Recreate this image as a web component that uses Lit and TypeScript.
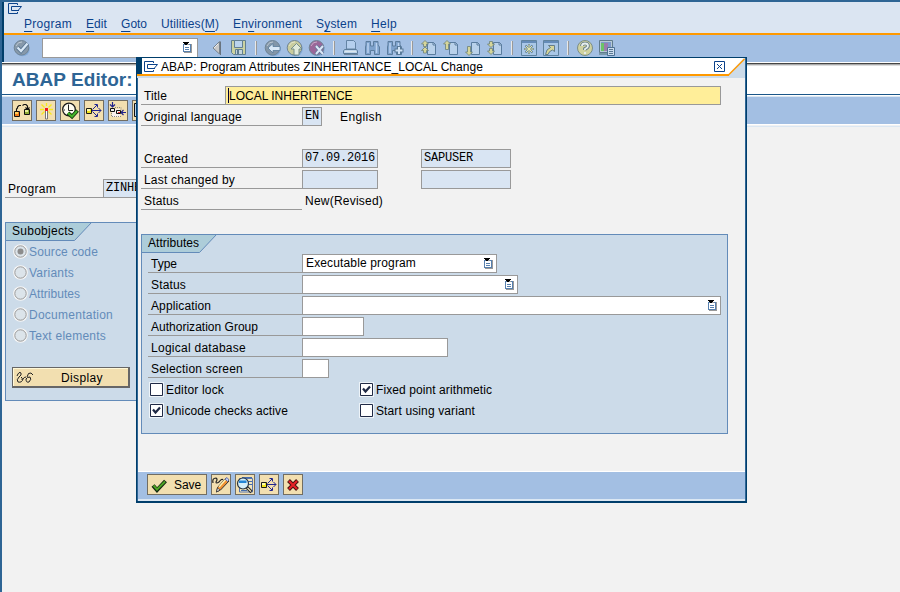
import { LitElement, html, svg, css, nothing } from "lit";
import { customElement, property } from "lit/decorators.js";
import { styleMap } from "lit/directives/style-map.js";

const SANS = '"Liberation Sans", Arial, sans-serif';
const MONO = '"Liberation Mono", "Courier New", monospace';
const ctx = document.createElement("canvas").getContext("2d")!;

/* Letter spacing that makes a label take the given width. */
const label = (text: string, width: number, font = `12px ${SANS}`, content: unknown = text) => {
  ctx.font = font;
  const ls = (width - ctx.measureText(text).width) / text.length;
  return html`<span style=${styleMap({ letterSpacing: ls.toFixed(3) + "px" })}>${content}</span>`;
};
const mono = (text: string) => label(text, text.length * 7, `12px ${MONO}`);

const page = svg`<path d="M7.500 3.500H13.500L15.500 5.500V15.500H7.500Z" fill="#b9d1ea" stroke="#5a7c9e"/><path d="M13 3V6H16" fill="none" stroke="#5a7c9e"/>`;
const binoc = svg`<path d="M2 2.500H6.500V7H9.500V2.500H14V6L15.500 8V15.500H10.500V11.500H6.500V15.500H1.500V8L2 6Z" fill="#7ea2cc" stroke="#5c7d9e"/><path d="M4 4V14M12.500 4V14" stroke="#bad2ef" stroke-width="1.500"/>`;
const up = (x: number, y: number, h = 7) => svg`<path d="M${x} ${y}L${x + 3.5} ${y + 3.5}H${x + 1.5}V${y + h}H${x - 1.5}V${y + 3.5}H${x - 3.5}Z" fill="#d6d69a" stroke="#6d8176" stroke-width=".8"/>`;
const down = (x: number, y: number, h = 7) => svg`<path d="M${x} ${y}L${x + 3.5} ${y - 3.5}H${x + 1.5}V${y - h}H${x - 1.5}V${y - 3.5}H${x - 3.5}Z" fill="#d6d69a" stroke="#6d8176" stroke-width=".8"/>`;
const ball = (fill: string) => svg`<circle cx="9.500" cy="10" r="7.300" fill="#83abd8"/><circle cx="8.500" cy="8.800" r="7.300" fill=${fill} stroke="#708495"/><path d="M3 7Q5 2.500 9 3" fill="none" stroke="#fff" opacity=".45"/>`;

const icons: Record<string, unknown> = {
  ok: svg`${ball("#8799aa")}<path d="M4.500 8.500L8 12L14.500 4.500" fill="none" stroke="#567491" stroke-width="4"/><path d="M4.500 8.500L8 12L14.500 4.500" fill="none" stroke="#d9e8f6" stroke-width="2.300"/>`,
  prev: svg`<path d="M11.500 2.500V15L5 9Z" fill="#c9c9c9" stroke="#77828c"/><path d="M12.500 2.500V16" stroke="#68737f"/><path d="M10 5L6 9" stroke="#eee"/>`,
  disk: svg`<path d="M1.500 1.500H15.500V15.500H3.500L1.500 13.500Z" fill="#cbd2a1" stroke="#627f91"/><path d="M4.500 1.500H12.500V8.500H4.500Z" fill="#bad3ed" stroke="#627f91"/><path d="M5.500 10.500H12.500V15.500H5.500Z" fill="#c5d5dd" stroke="#627f91"/><path d="M8 11V15" stroke="#5f7c90" stroke-width="2"/>`,
  back: svg`${ball("#8396a8")}<path d="M4 9L9 4.500V7.500H16V11.500H9V14Z" fill="#d9e8f6" stroke="#587b9b" stroke-width=".8"/>`,
  up: svg`${ball("#c9cc9d")}<path d="M10.500 4.500L16 10H13V16H8V10H5Z" fill="#e2ebdb" stroke="#6d8784" stroke-width=".9"/>`,
  cancel: svg`${ball("#9a6799")}<path d="M8 7L15 15M15 7L8 15" stroke="#5f789a" stroke-width="3.500"/><path d="M8 7L15 15M15 7L8 15" stroke="#dde7f6" stroke-width="2"/>`,
  print: svg`<path d="M4.500 1.500H11.500L13.500 3.500V10H4.500Z" fill="#b5cfee" stroke="#6484a5"/><path d="M2.500 10.500H14.500L15.500 12V14.500H1.500V12Z" fill="#bfd5eb" stroke="#5d7d9c"/><path d="M2 15.500H16" stroke="#6f879e"/><path d="M3 12.500H14" stroke="#dbe7ed"/>`,
  find: binoc,
  findnext: svg`${binoc}<path d="M13 7V16M8.500 11.500H17.500" stroke="#587997" stroke-width="4.200"/><path d="M13 8V15M9.500 11.500H16.500" stroke="#d0e2f5" stroke-width="2"/>`,
  first: svg`${page}${up(5, 1.5, 6)}${up(5, 8, 6)}`,
  pgup: svg`${page}${up(5, 1.5, 9)}`,
  pgdn: svg`${page}${down(5, 16.5, 9)}`,
  last: svg`${page}${down(5, 8.5, 6)}${down(5, 15.5, 6)}`,
  session: svg`<path d="M1.500 1.500H16.500V16.500H1.500Z" fill="#a9c7e7" stroke="#60839f"/><path d="M2 3H16" stroke="#648bb8" stroke-width="2"/><path d="M9 5V15M4 10H14M5.500 6.500L12.500 13.500M12.500 6.500L5.500 13.500" stroke="#627f91" stroke-width="1.800"/><path d="M9 5.500V14.500M4.500 10H13.500M6 7L12 13M12 7L6 13" stroke="#e4e6a9"/>`,
  shortcut: svg`<path d="M1.500 1.500H16.500V16.500H1.500Z" fill="#a9c7e7" stroke="#60839f"/><path d="M2 3H16" stroke="#648bb8" stroke-width="2"/><path d="M6.500 6.500H12.500V12.500L10.500 11Q7 12 6 15.500H3.500Q4 10 8.500 8.500Z" fill="#d6d69a" stroke="#5b7580" stroke-width=".9"/>`,
  help: svg`<circle cx="9" cy="9" r="7.500" fill="#d0d29f" stroke="#7c8e88"/><path d="M6 7Q6 4.500 9 4.500Q12 4.500 12 7Q12 8.500 9 10V11" fill="none" stroke="#657d87" stroke-width="3.700"/><path d="M6 7Q6 4.500 9 4.500Q12 4.500 12 7Q12 8.500 9 10V11M9 13V15" fill="none" stroke="#e5eded" stroke-width="1.900"/>`,
  monitor: svg`<path d="M1.500 1.500H14.500V13.500H1.500Z" fill="#b7cbd6" stroke="#607b8c"/><path d="M3 3H13V12H3Z" fill="#7e98ca"/><path d="M3 4H6V12H3Z" fill="#6cc468"/><path d="M6 4H10V12H6Z" fill="#9b7cad"/><path d="M1 15H9" stroke="#7998aa" stroke-width="2"/><path d="M9.500 8.500H16.500V16.500H9.500Z" fill="#cbdced" stroke="#4f7295"/><path d="M11 10.500H15M11 12.500H15M11 14.500H15" stroke="#5b7894"/>`,

  objects: svg`<path d="M3.500 9V7L4.500 6V5L6 3.500H8M9.500 3.500L11 2.500H13L14.500 4V7M12.500 5.500L14.500 7.500L16.500 5.500" fill="none" stroke="#111" stroke-width="1.100"/><path d="M1.500 9.500H6.500V14.500H1.500Z" fill="#f27b18" stroke="#111"/><path d="M2 10H5V12H2Z" fill="#ffd05c"/><path d="M11.500 7.500H16.500V12.500H11.500Z" fill="#8eaa35" stroke="#111"/><path d="M12 8H15V10H12Z" fill="#e6ee95"/>`,
  wand: svg`<path d="M9.500 1V4M3 7.500H7M12 7.500H16M4.500 2.500L7.500 5.500M14.500 2.500L11.500 5.500M4.500 12.500L7.500 9.500M14.500 12.500L11.500 9.500" stroke="#f8e81a" stroke-width="1.300"/><path d="M8.500 8.500H10.500V17H8.500Z" fill="#fff" stroke="#777"/><path d="M8 6H11V9H8Z" fill="#f01818"/>`,
  clock: svg`<circle cx="8" cy="7.500" r="6.300" fill="#fffdf2" stroke="#181818" stroke-width="1.300"/><path d="M7.500 2.500V8.500H12M3 8H4M7.500 13V12" fill="none" stroke="#222"/><path d="M7 11L11 14.500L16.500 8.500" fill="none" stroke="#173a11" stroke-width="3.900"/><path d="M7 11L11 14.500L16 9" fill="none" stroke="#43b52a" stroke-width="2"/>`,
  where: svg`<path d="M1.500 6.500H6.500V11.500H1.500Z" fill="#f2e51c" stroke="#191919"/><path d="M2 8H5" stroke="#fffbb0" stroke-width="2"/><path d="M7 8.500H16M7.500 7.500L12 3M7.500 9.500L12 14M13.500 6L16 8.500L13.500 11M9.500 2.500H12.500V5.500M9.500 14.500H12.500V11.500" fill="none" stroke="#202590"/>`,
  move: svg`<path d="M3.500 0V5M1 2.500L3.500 5L6 2.500M17 10.500H12M14.500 8L12 10.500L14.500 13" fill="none" stroke="#20238c" stroke-width="1.200"/><path d="M3 7H11V15H3Z" fill="#f7f0ee"/><path d="M1.500 6.500H5.500V9.500H1.500ZM7.500 8.500H11.500V11.500H7.500Z" fill="#eee" stroke="#111"/><path d="M9 10H11V11H9Z" fill="#ee3333"/><path d="M2.500 11V14.500H13M6 5.500H12V8" fill="none" stroke="#888" stroke-dasharray="1 1"/>`,
  window: svg`<path d="M1.500 1.500H16V14.500H1.500Z" fill="#b9d2ed" stroke="#111"/>`,
  glasses: svg`<path d="M1 8Q3 3 5 5Q6 7 3 9Q0 12 2 14Q6 15 7 11Q8 9 10 9M10 11Q10 15 13 14Q16 11 14 9Q11 9 10 11M11 9Q12 4 15 5L17 7M5 9Q7 10 6 12" fill="none" stroke="#222"/>`,
  check: svg`<path d="M3 9.500L7 14L15.500 5" fill="none" stroke="#132711" stroke-width="4"/><path d="M3.500 9.500L7 13.500L15 5.500" fill="none" stroke="#4fa425" stroke-width="1.900"/>`,
  edit: svg`<path d="M1 7Q0 2 4 2Q6 3 4 6Q4 8 7 6Q10 2 11 4" fill="none" stroke="#222" stroke-width="1.200"/><path d="M14 2L17 5L8.500 14L4.500 16L5.500 11.500Z" fill="#f19133" stroke="#333"/><path d="M14 3L7 11" stroke="#fff1b1" stroke-width="1.500"/><path d="M13 3L15 1.500L17 4L15.500 5.500Z" fill="#c2d0f1" stroke="#4b5aa0" stroke-width=".8"/><path d="M5.500 12L8 14L4.500 16Z" fill="#eee" stroke="#222" stroke-width=".6"/>`,
  detail: svg`<path d="M3.500 2.500H16.500V16H3.500Z" fill="#f1e7bf" stroke="#5674b0"/><path d="M6 1.500H16M12 5.500H16M13 8.500H16M5 14.500H11" stroke="#456cab"/><circle cx="7" cy="7.500" r="5.500" fill="#d4effb" stroke="#283440" stroke-width="1.200"/><path d="M3 7V4.500H10.500V7Z" fill="#2385d5"/><path d="M11 11.500L15.500 16" stroke="#222" stroke-width="3.200"/><path d="M11.500 12L15 15.500" stroke="#eee2bc" stroke-width="1.200"/>`,
  close: svg`<path d="M4.500 4.500L13.500 13.500M13.500 4.500L4.500 13.500" stroke="#451310" stroke-width="4"/><path d="M5 5L13 13M13 5L5 13" stroke="#e62225" stroke-width="2.100"/>`,
};
const icon = (name: string) => html`<svg class="ic" width="18" height="18" viewBox="0 0 18 18" fill="none">${icons[name]}</svg>`;
const exit = html`<svg class="exit" width="16" height="13" viewBox="0 0 16 13" fill="none" stroke="#0b428b"><path d="M10.500 3V1.500H1.500V11.500H10.500V10M12 8.500H4.500V4.500H14.500L11.500 8" /></svg>`;
const drop = html`<svg class="drop" width="9" height="11" viewBox="0 0 9 11" shape-rendering="crispEdges"><path d="M1 2H9V11H1Z" fill="#999"/><path d="M.5 2.500H7.500V9.500H.5Z" fill="#fff" stroke="#5780ae"/><path d="M2 5.500H6M2 7.500H6" stroke="#5780ae"/><path d="M4 2H6V3H4Z" fill="#999"/><path d="M0 0H6V1H5V2H4V3H2V2H1V1H0Z" fill="#000"/></svg>`;

const base = css`
  * { box-sizing: border-box; }
  span { white-space: pre; }
  svg { display: block; flex: none; }
  .field { height: 19px; border: 1px solid #999; background: #fff; display: flex; align-items: center; padding-left: 3px; line-height: 17px; flex: none; }
  .field.ro { background: #d9e5f3; }
  .mono { font-family: "Liberation Mono", "Courier New", monospace; padding-left: 2px; }
  .lab { height: 19px; border-bottom: 1px solid #999; padding: 3px 0 0 3px; line-height: 15px; flex: none; }
  .drop { margin: 3px 3px 0 auto; align-self: flex-start; }
  .btn { display: flex; align-items: center; justify-content: center; width: 20px; height: 21px; padding-top: 1px; background: #f2dfb0; border: 1px solid #726d61; overflow: hidden; flex: none; }
`;

@customElement("group-box")
class GroupBox extends LitElement {
  @property() heading = "";
  @property({ type: Number }) span = 50;
  @property({ type: Number }) tab = 75;
  static styles = [base, css`
    :host { display: block; border: 1px solid #638bb9; background: #ccdbe9; }
    .head { position: relative; height: 18px; display: flex; }
    .head svg { margin: -1px 0 0 -1px; }
    .head div { position: absolute; left: 6px; top: 0; line-height: 16px; }
  `];
  render() {
    const t = this.tab;
    return html`<div class="head"><svg width=${t} height="19" viewBox="0 0 ${t} 19"><path d="M.5 .5H${t - 0.5}L${t - 17.5} 18.5H.5Z" fill="#adcdd9" stroke="#638bb9"/></svg>
      <div>${label(this.heading, this.span)}</div></div><slot></slot>`;
  }
}

@customElement("attributes-dialog")
class AttributesDialog extends LitElement {
  static styles = [base, css`
    :host { display: flex; flex-direction: column; background: #f2f2f2; border: 1px solid #003e6b; border-bottom-width: 2px; box-shadow: inset 1px 0 #2e6595, inset -1px 0 #2e6595; color: #000; }
    .bar { height: 20px; flex: none; display: flex; background: #ccdbe9; padding-left: 5px; position: relative; margin-right: 1px; }
    .corner { position: absolute; left: 0; top: 0; }
    .name { position: relative; display: flex; line-height: 18px; }
    .exit { margin: 2px 2px 0 1px; }
    .x { position: relative; margin: 3px 20px 0 auto; }
    .body { flex: 1; padding: 8px 18px 0 4px; }
    .row { display: flex; margin-bottom: 2px; }
    .row .lab { width: 161px; }
    .row.title .lab { width: 84px; }
    .field.big { width: 496px; background: #ffee99; padding-left: 2px; line-height: 18px; }
    .caret { width: 1px; height: 15px; background: #003; flex: none; }
    .en { width: 20px; } .w76 { width: 76px; } .w90 { width: 90px; margin-left: 43px; }
    .plain { line-height: 20px; height: 19px; padding-left: 3px; }
    .plain.far { padding-left: 18px; }
    .skip { height: 21px; }
    group-box { height: 200px; margin-top: 24px; width: 587px; }
    .attrs { padding: 1px 0 0 6px; }
    .attrs .lab { width: 154px; padding-left: 3px; }
    .checks { display: grid; grid-template-columns: 210px 1fr; grid-auto-rows: 21px; padding: 2px 0 0 1px; }
    .check { display: flex; align-items: center; gap: 2px; height: 15px; }
    .foot { height: 30px; flex: none; border-top: 1px solid #fff; background: #a3bfe3; border-bottom: 2px solid #dbe7f3; display: flex; gap: 4px; padding: 2px 0 0 9px; margin: 0 1px; }
    .save { width: 60px; justify-content: flex-start; gap: 6px; padding-left: 2px; }
  `];
  row(name: string, w: number, fw: number, value: unknown = nothing, menu = false) {
    return html`<div class="row"><div class="lab">${label(name, w)}</div><div class="field" style=${styleMap({ width: fw + "px" })}>${value}${menu ? drop : nothing}</div></div>`;
  }
  check(name: string, w: number, on: boolean) {
    return html`<div class="check"><svg width="15" height="15" viewBox="0 0 15 15"><path d="M0 0H15V15H0Z" fill="#edf3f8"/><path d="M1.500 1.500H13.500V13.500H1.500Z" fill="#fff" stroke="#202a46"/>${on ? svg`<path d="M4 6.500L6.500 9.500L11 4.500" fill="none" stroke="#202a46" stroke-width="2.200"/>` : nothing}</svg>${label(name, w)}</div>`;
  }
  render() {
    return html`
      <div class="bar">
        <svg class="corner" width="608" height="20" viewBox="0 0 608 20"><path d="M4 0H607L592 16H4Z" fill="#fff"/><path d="M0 0H5V16H0Z" fill="#003e6b"/><path d="M0 17H592" fill="none" stroke="#f90" stroke-width="2"/><path d="M591 17.500L607.500 1" fill="none" stroke="#f90" stroke-width="1.400"/></svg>
        <div class="name">${exit}${label("ABAP: Program Attributes ZINHERITANCE_LOCAL Change", 323)}</div>
        <svg class="x" width="11" height="11" viewBox="0 0 11 11" fill="none" stroke="#0b428b"><path d="M.5 .5H10.500V10.500H.5Z"/><path d="M3 3L8 8M8 3L3 8"/></svg>
      </div>
      <div class="body">
        <div class="row title"><div class="lab">${label("Title", 23)}</div><div class="field big"><i class="caret"></i>${label("LOCAL INHERITENCE", 124)}</div></div>
        <div class="row"><div class="lab">${label("Original language", 98)}</div><div class="field ro mono en">${mono("EN")}</div><div class="plain far">${label("English", 42)}</div></div>
        <div class="skip"></div>
        <div class="row"><div class="lab">${label("Created", 44)}</div><div class="field ro mono w76">${mono("07.09.2016")}</div><div class="field ro mono w90">${mono("SAPUSER")}</div></div>
        <div class="row"><div class="lab">${label("Last changed by", 91)}</div><div class="field ro w76"></div><div class="field ro w90"></div></div>
        <div class="row"><div class="lab">${label("Status", 35)}</div><div class="plain">${label("New(Revised)", 78)}</div></div>
        <group-box heading="Attributes" .span=${51} .tab=${76}>
          <div class="attrs">
            ${this.row("Type", 26, 195, label("Executable program", 110), true)}
            ${this.row("Status", 35, 216, nothing, true)}
            ${this.row("Application", 60, 419, nothing, true)}
            ${this.row("Authorization Group", 107, 62)}
            ${this.row("Logical database", 95, 146)}
            ${this.row("Selection screen", 92, 27)}
            <div class="checks">
              ${this.check("Editor lock", 58, false)}${this.check("Fixed point arithmetic", 116, true)}
              ${this.check("Unicode checks active", 122, true)}${this.check("Start using variant", 99, false)}
            </div>
          </div>
        </group-box>
      </div>
      <div class="foot"><div class="btn save">${icon("check")}${label("Save", 27)}</div>
        ${["edit", "detail", "where", "close"].map((n) => html`<div class="btn">${icon(n)}</div>`)}</div>`;
  }
}

@customElement("app-root")
class AppRoot extends LitElement {
  static styles = [base, css`
    :host { display: flex; flex-direction: column; position: relative; width: 900px; height: 592px; overflow: hidden; background: #f2f2f2; font: 12px "Liberation Sans", Arial, sans-serif; color: #000; border-top: 2px solid #2e6595; border-left: 2px solid #2e6595; box-sizing: border-box; }
    .top { border-left: 2px solid #003e6b; flex: none; }
    .menu { height: 31px; background: #dbe5f2; padding: 0 0 0 3px; color: #0b428b; }
    .menu nav { display: flex; gap: 14px; padding-left: 17px; line-height: 15px; margin-top: 2px; }
    .menu u { text-underline-offset: 3px; text-decoration-thickness: 1px; }
    .tools { height: 29px; border-top: 2px solid #f90; background: #a3bfe3; display: flex; align-items: center; padding-bottom: 1px; }
    .slot { width: 22px; display: flex; justify-content: center; flex: none; }
    .first { margin: 0 9px 0 7px; }
    .cmd { width: 156px; height: 20px; margin-right: 8px; }
    .cmd .drop { margin-right: 5px; }
    .sep { width: 12px; height: 14px; display: flex; justify-content: center; flex: none; }
    .sep::before { content: ""; width: 2px; background: linear-gradient(90deg, #e8e8e8 50%, #999 50%); }
    .rule { height: 4px; flex: none; background: linear-gradient(#fff 25%, #454545 25% 50%, #aaa 50% 75%, #ddd 75%); }
    .title { height: 28px; background: #fff; flex: none; padding-left: 10px; font: bold 19px/27px "Liberation Sans", Arial, sans-serif; color: #2e6595; }
    .bar { height: 33px; flex: none; border-top: 1px solid #1a5689; background: linear-gradient(#fff 1px, #dbe7f3 1px 2px, #a3bfe3 2px 29px, #fff 29px 30px, #f2f2f2 30px 31px, #dbe7f3 31px); display: flex; gap: 4px; padding: 5px 0 0 10px; }
    .work { flex: 1; padding: 52px 0 0 3px; }
    .prog { display: flex; }
    .prog .lab { width: 98px; }
    .prog .field { width: 60px; }
    group-box { width: 200px; height: 179px; margin-top: 24px; }
    .radio { display: flex; align-items: center; gap: 1px; height: 21px; padding-left: 7px; color: #638bb9; }
    .display { display: flex; align-items: center; width: 118px; height: 21px; margin: 21px 0 0 6px; background: #f2dfb0; border: 1px solid #666; border-right-width: 2px; border-bottom-width: 2px; box-shadow: inset 1px 1px #fff8d8; padding-left: 3px; gap: 27px; }
    .display span { padding-top: 1px; }
    attributes-dialog { position: absolute; left: 134px; top: 55px; width: 611px; height: 446px; }
  `];
  item(a: string, k: string, b: string, w: number) {
    return label(a + k + b, w, undefined, html`${a}<u>${k}</u>${b}`);
  }
  radio(name: string, w: number, on = false) {
    return html`<div class="radio"><svg width="15" height="15" viewBox="0 0 15 15"><circle cx="7.500" cy="7.500" r="7.300" fill="#f6f6f6"/><circle cx="7.500" cy="7.500" r="5.700" fill="#dce4ea" stroke="#999"/>${on ? svg`<circle cx="7.500" cy="7.500" r="3" fill="#8c8c8c"/>` : nothing}</svg>${label(name, w)}</div>`;
  }
  render() {
    const tools = "prev disk | back up cancel | print find findnext | first pgup pgdn last | session shortcut | help monitor".split(" ");
    return html`
      <div class="top">
        <div class="menu">${exit}<nav>
          ${this.item("", "P", "rogram", 48)}${this.item("", "E", "dit", 21)}${this.item("", "G", "oto", 26)}${this.item("Utilities(", "M", ")", 58)}${this.item("En", "v", "ironment", 69)}${this.item("S", "y", "stem", 41)}${this.item("", "H", "elp", 26)}
        </nav></div>
        <div class="tools"><div class="slot first">${icon("ok")}</div><div class="field cmd">${drop}</div>
          ${tools.map((t) => (t === "|" ? html`<div class="sep"></div>` : html`<div class="slot">${icon(t)}</div>`))}
        </div>
      </div>
      <div class="rule"></div>
      <div class="title">${label("ABAP Editor:", 121, `bold 19px ${SANS}`)}</div>
      <div class="bar">${["objects", "wand", "clock", "where", "move", "window"].map((n) => html`<div class="btn">${icon(n)}</div>`)}</div>
      <div class="work">
        <div class="prog"><div class="lab">${label("Program", 48)}</div><div class="field ro mono">${mono("ZINHE")}</div></div>
        <group-box heading="Subobjects" .span=${62} .tab=${87}>
          ${this.radio("Source code", 69, true)}${this.radio("Variants", 45)}${this.radio("Attributes", 51)}${this.radio("Documentation", 84)}${this.radio("Text elements", 77)}
          <div class="display">${icon("glasses")}${label("Display", 42)}</div>
        </group-box>
      </div>
      <attributes-dialog></attributes-dialog>`;
  }
}
